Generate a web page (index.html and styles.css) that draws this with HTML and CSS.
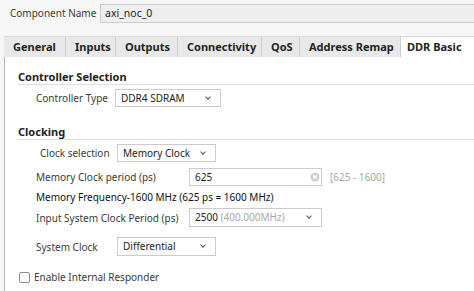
FILE: index.html
```html
<!DOCTYPE html>
<html lang="en">
<head>
    <meta charset="UTF-8">
    <title>axi_noc_0</title>
    <link rel="stylesheet" href="styles.css">
</head>
<body>

<div class="name-row">
    <span class="name-label">Component Name</span>
    <div class="name-input">axi_noc_0</div>
</div>

<div class="tabs">
    <div class="tab t-general">General</div>
    <div class="tab t-inputs">Inputs</div>
    <div class="tab t-outputs">Outputs</div>
    <div class="tab t-conn">Connectivity</div>
    <div class="tab t-qos">QoS</div>
    <div class="tab t-remap">Address Remap</div>
    <div class="tab active">DDR Basic</div>
</div>

<div class="panel">
    <div class="section-title">Controller Selection</div>
    <div class="row row-ctrl">
        <span class="label l-ctrl">Controller Type</span>
        <div class="select w-ctrl">DDR4 SDRAM<span class="chev"></span></div>
    </div>

    <div class="section-title t-clocking">Clocking</div>
    <div class="row row-clk">
        <span class="label l-clk">Clock selection</span>
        <div class="select w-clk">Memory Clock<span class="chev"></span></div>
    </div>
    <div class="row row-period">
        <span class="label l-wide">Memory Clock period (ps)</span>
        <div class="text-input">625
            <svg class="clear" width="10" height="10" viewBox="0 0 10 10">
                <circle cx="5" cy="5" r="4.5" fill="#cfcfcf"/>
                <path d="M3.2 3.2 L6.8 6.8 M6.8 3.2 L3.2 6.8" stroke="#fff" stroke-width="1.3"/>
            </svg>
        </div>
        <span class="range">[625 - 1600]</span>
    </div>
    <div class="freq">Memory Frequency-1600 MHz (625 ps = 1600 MHz)</div>
    <div class="row row-input">
        <span class="label l-wide">Input System Clock Period (ps)</span>
        <div class="select w-sys">2500&nbsp;<span class="dim">(400.000MHz)</span><span class="chev"></span></div>
    </div>
    <div class="row row-sys">
        <span class="label l-sys">System Clock</span>
        <div class="select w-clk">Differential<span class="chev"></span></div>
    </div>

    <label class="check">
        <span class="box"></span>
        Enable Internal Responder
    </label>
</div>

</body>
</html>
```

FILE: styles.css
```css
body {
    margin: 0;
    width: 474px;
    height: 291px;
    overflow: hidden;
    background: #f6f6f6;
    font-family: "Noto Sans", sans-serif;
    font-size: 10px;
    color: #3a3a3a;
}

.name-row {
    display: flex;
    align-items: center;
    height: 26px;
    padding-left: 10px;
}

.name-label {
    width: 90px;
    white-space: nowrap;
}

.name-input {
    flex: 1;
    height: 17px;
    line-height: 17px;
    padding-left: 4px;
    background: #eeeeee;
    border: 1px solid #cdcdcd;
    border-right: none;
    color: #222;
    font-size: 10.5px;
}

.tabs {
    display: flex;
    margin-top: 10px;
    margin-left: 4px;
    border-top: 1px solid #dadada;
    background: #e8e8e8;
}

.tab {
    height: 20px;
    line-height: 20px;
    padding-left: 9px;
    font-weight: bold;
    font-size: 11px;
    color: #222;
    white-space: nowrap;
    box-sizing: border-box;
    border-right: 1px solid #cfcfcf;
}

.t-general { width: 62px; }
.t-inputs { width: 50px; }
.t-outputs { width: 62px; }
.t-conn { width: 84px; }
.t-qos { width: 38px; }
.t-remap { width: 101px; }

.tab.active {
    flex: 1;
    padding-left: 6px;
    background: #fff;
    border-right: none;
}

.panel {
    margin-left: 4px;
    height: 234px;
    box-sizing: border-box;
    background: #fff;
    border-left: 1px solid #b4b4b4;
    padding-top: 13px;
}

.section-title {
    margin-left: 13px;
    font-weight: bold;
    color: #222;
    font-size: 11px;
    line-height: 14px;
    border-bottom: 1px solid #dedede;
}

.t-clocking {
    margin-top: 18px;
}

.row {
    display: flex;
    align-items: center;
    height: 18px;
}

.row-ctrl { margin-top: 4px; }
.row-clk { margin-top: 4px; }
.row-period { margin-top: 6px; }
.row-input { margin-top: 4px; height: 19px; }
.row-sys { margin-top: 10px; height: 19px; }

.label {
    white-space: nowrap;
    box-sizing: border-box;
}

.l-ctrl { width: 110px; padding-left: 31px; }
.l-clk { width: 112px; padding-left: 35px; }
.l-sys { width: 112px; padding-left: 31px; }
.l-wide { width: 184px; padding-left: 31px; }

.select {
    position: relative;
    height: 100%;
    line-height: 17px;
    padding-left: 5px;
    border: 1px solid #cbcbcb;
    background: #fff;
    box-sizing: border-box;
    white-space: nowrap;
    color: #222;
}

.w-ctrl { width: 106px; }
.w-clk { width: 99px; }
.w-sys { width: 133px; }

.chev {
    position: absolute;
    right: 10px;
    top: 5px;
    width: 3px;
    height: 3px;
    border-right: 1.5px solid #555;
    border-bottom: 1.5px solid #555;
    transform: rotate(45deg);
}

.dim {
    color: #a8a8a8;
}

.text-input {
    position: relative;
    width: 133px;
    height: 100%;
    line-height: 16px;
    padding-left: 5px;
    border: 1px solid #cbcbcb;
    box-sizing: border-box;
    color: #222;
}

.clear {
    position: absolute;
    right: 1px;
    top: 3px;
}

.range {
    margin-left: 8px;
    color: #a8a8a8;
}

.freq {
    margin-top: 4px;
    padding-left: 31px;
    line-height: 14px;
    color: #111;
}

.check {
    display: flex;
    align-items: center;
    margin-top: 14px;
    margin-left: 14px;
    line-height: 14px;
}

.box {
    width: 11px;
    height: 11px;
    box-sizing: border-box;
    border: 1px solid #8a8a8a;
    border-radius: 2px;
    margin-right: 4px;
}
```
